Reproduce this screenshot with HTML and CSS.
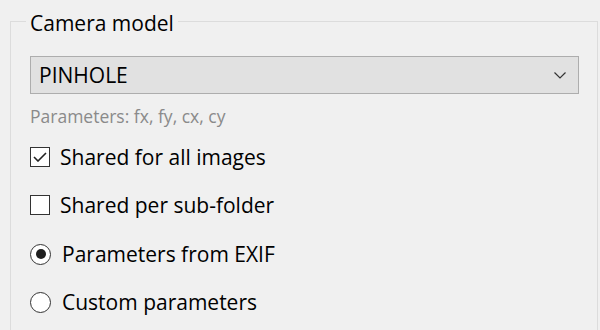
FILE: index.html
```html
<!DOCTYPE html>
<html>
<head>
<meta charset="utf-8">
<link rel="stylesheet" href="styles.css">
</head>
<body>
<fieldset class="group">
  <legend class="group-title">Camera model</legend>
  <div class="combo">
    <span class="combo-text">PINHOLE</span>
    <svg class="combo-arrow" width="12" height="7" viewBox="0 0 12 7"><path d="M0.5 0.5 L6 6 L11.5 0.5" fill="none" stroke="#333" stroke-width="1.2"/></svg>
  </div>
  <div class="hint">Parameters: fx, fy, cx, cy</div>
  <div class="options">
    <div class="option"><span class="check checked"><svg width="14" height="10" viewBox="0 0 14 10"><path d="M1 5 L5 9 L13 1" fill="none" stroke="#222" stroke-width="1.6"/></svg></span><span class="label">Shared for all images</span></div>
    <div class="option"><span class="check"></span><span class="label">Shared per sub-folder</span></div>
  </div>
  <div class="options radios">
    <div class="option"><span class="radio checked"></span><span class="label radio-label">Parameters from EXIF</span></div>
    <div class="option"><span class="radio"></span><span class="label radio-label">Custom parameters</span></div>
  </div>
</fieldset>
</body>
</html>
```
FILE: styles.css
```css
html, body {
  margin: 0;
  padding: 0;
  background: #f0f0f0;
  width: 600px;
  height: 330px;
  overflow: hidden;
}
body {
  font-family: "Open Sans", "Noto Sans", sans-serif;
  font-size: 21px;
  color: #000;
}
.group {
  box-sizing: border-box;
  width: 588px;
  height: 326px;
  margin: 5px 0 0 10px;
  padding: 0 18px 0 19px;
  border: 1px solid #dcdcdc;
  min-width: 0;
}
.group-title {
  padding: 4px 4px 0;
  margin-left: -4px;
  line-height: 28px;
}
.combo {
  box-sizing: border-box;
  margin-top: 19px;
  height: 38px;
  border: 1px solid #adadad;
  background: #e1e1e1;
  display: flex;
  align-items: center;
  justify-content: space-between;
  padding: 0 12px 0 8px;
}
.combo-text {
  line-height: 36px;
}
.combo-arrow {
  display: block;
}
.hint {
  color: #8a8a8a;
  font-size: 17.5px;
  line-height: 22px;
  margin: 11px 0 6px;
}
.options {
  display: flex;
  flex-direction: column;
}
.radios {
  margin-top: 1px;
}
.option {
  height: 48px;
  display: flex;
  align-items: center;
}
.check {
  box-sizing: border-box;
  width: 20px;
  height: 20px;
  border: 1px solid #333;
  background: #fff;
  display: flex;
  align-items: center;
  justify-content: center;
  flex: none;
}
.radio {
  box-sizing: border-box;
  width: 21px;
  height: 21px;
  border: 1px solid #333;
  border-radius: 50%;
  background: #fff;
  flex: none;
  display: flex;
  align-items: center;
  justify-content: center;
}
.radio.checked::after {
  content: "";
  width: 10px;
  height: 10px;
  border-radius: 50%;
  background: #1f1f1f;
}
.label {
  margin-left: 10px;
}
.radio-label {
  margin-left: 11px;
}
```
